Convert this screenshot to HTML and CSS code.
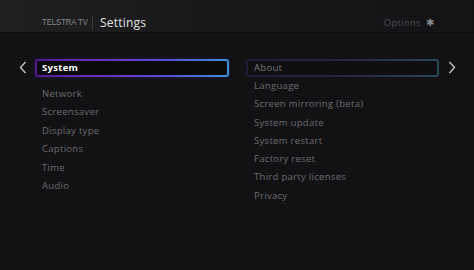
FILE: index.html
```html
<!DOCTYPE html>
<html>
<head>
<meta charset="utf-8">
<link rel="stylesheet" href="styles.css">
</head>
<body>
<header class="topbar">
  <span class="brand">TELSTRA TV</span>
  <span class="divider"></span>
  <span class="title">Settings</span>
  <span class="options">Options <span class="star">✱</span></span>
</header>
<main class="content">
  <div class="nav nav-left">
    <svg width="8" height="13" viewBox="0 0 8 13"><path d="M6.5 1 L1.5 6.5 L6.5 12" fill="none" stroke="#c8c8c8" stroke-width="1.3"/></svg>
  </div>
  <ul class="menu menu-main">
    <li class="item focused">System</li>
    <li class="item first-after">Network</li>
    <li class="item">Screensaver</li>
    <li class="item">Display type</li>
    <li class="item">Captions</li>
    <li class="item">Time</li>
    <li class="item">Audio</li>
  </ul>
  <ul class="menu menu-sub">
    <li class="item selected">About</li>
    <li class="item">Language</li>
    <li class="item">Screen mirroring (beta)</li>
    <li class="item">System update</li>
    <li class="item">System restart</li>
    <li class="item">Factory reset</li>
    <li class="item">Third party licenses</li>
    <li class="item">Privacy</li>
  </ul>
  <div class="nav nav-right">
    <svg width="8" height="13" viewBox="0 0 8 13"><path d="M1.5 1 L6.5 6.5 L1.5 12" fill="none" stroke="#c8c8c8" stroke-width="1.3"/></svg>
  </div>
</main>
</body>
</html>
```
FILE: styles.css
```css
html, body {
  margin: 0;
  padding: 0;
}
body {
  width: 474px;
  height: 270px;
  overflow: hidden;
  background: #121215;
  font-family: "Open Sans", "Liberation Sans", sans-serif;
}
.topbar {
  height: 33px;
  box-sizing: border-box;
  display: flex;
  align-items: center;
  padding: 12px 40px 0 42px;
  background: linear-gradient(90deg, #202021 0%, #19191b 40%, #131316 100%);
  border-bottom: 1px solid #0c0c0e;
}
.brand {
  font-family: "Liberation Sans", sans-serif;
  font-size: 8.5px;
  color: #8a8a8c;
  white-space: nowrap;
  display: inline-block;
  transform: scaleX(0.9);
  transform-origin: left center;
  width: 46px;
}
.divider {
  width: 1px;
  height: 15px;
  background: #38383a;
  margin: 0 7px 0 4px;
}
.title {
  font-size: 12px;
  color: #e2e2e2;
  letter-spacing: 0.2px;
  white-space: nowrap;
}
.options {
  margin-left: auto;
  font-size: 9.5px;
  color: #4e4e52;
  letter-spacing: 0.3px;
  white-space: nowrap;
}
.star {
  color: #8a8a8e;
  font-size: 10px;
  margin-left: 2px;
}
.content {
  display: flex;
  padding-top: 26px;
}
.nav {
  width: 35px;
  display: flex;
  padding-top: 2px;
}
.nav-left {
  padding-left: 19px;
  box-sizing: border-box;
}
.nav-right {
  padding-left: 9px;
  box-sizing: border-box;
}
.menu {
  list-style: none;
  margin: 0;
  padding: 0;
  width: 194px;
}
.menu-sub {
  margin-left: 17px;
  width: 193px;
}
.item {
  height: 18.25px;
  line-height: 18.5px;
  padding-left: 7px;
  font-size: 9.5px;
  color: #6c6c6e;
  letter-spacing: 0.3px;
  white-space: nowrap;
}
.menu-main .item {
  height: 18.4px;
}
.menu-sub .item {
  padding-left: 8px;
}
.item.focused {
  height: 18px;
  box-sizing: border-box;
  line-height: 14px;
  padding-left: 5px;
  border: 2px solid transparent;
  border-radius: 3px;
  background: linear-gradient(#0b0b0e, #0b0b0e) padding-box,
              linear-gradient(90deg, #4a1a8e 0%, #6a2bb8 25%, #5a4ad0 65%, #3d90dc 100%) border-box;
  box-shadow: 0 0 3px rgba(80, 60, 200, 0.35);
  color: #ffffff;
  font-weight: 700;
  margin-bottom: 8px;
}
.item.selected {
  height: 18px;
  box-sizing: border-box;
  line-height: 14px;
  padding-left: 6px;
  border: 2px solid transparent;
  border-radius: 3px;
  background: linear-gradient(#0f0f12, #0f0f12) padding-box,
              linear-gradient(90deg, #241a36 0%, #28233f 50%, #2b4656 100%) border-box;
  color: #7a7a7c;
}
```
